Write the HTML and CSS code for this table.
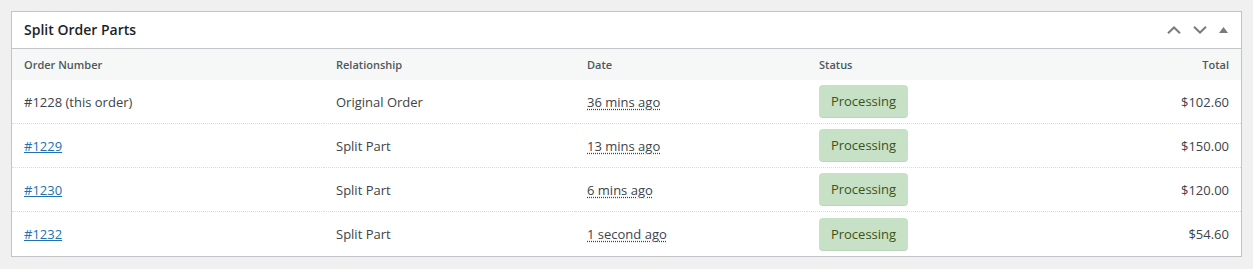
FILE: index.html
```html
<!DOCTYPE html>
<html>
<head>
<meta charset="utf-8">
<link rel="stylesheet" href="styles.css">
</head>
<body>
<div class="postbox">
  <div class="postbox-header">
    <h2 class="hndle">Split Order Parts</h2>
    <div class="handle-actions">
      <button class="handle-btn" aria-label="Move up">
        <svg width="14" height="8" viewBox="0 0 14 8"><path d="M1 7.2 L7 1.5 L13 7.2" fill="none" stroke="#787c82" stroke-width="2"/></svg>
      </button>
      <button class="handle-btn" aria-label="Move down">
        <svg width="14" height="8" viewBox="0 0 14 8"><path d="M1 0.8 L7 6.5 L13 0.8" fill="none" stroke="#787c82" stroke-width="2"/></svg>
      </button>
      <button class="handle-btn toggle" aria-label="Toggle panel">
        <svg width="9" height="6" viewBox="0 0 9 6"><path d="M0 6 L4.5 0 L9 6 Z" fill="#787c82"/></svg>
      </button>
    </div>
  </div>
  <table class="parts">
    <thead>
      <tr>
        <th class="c-num">Order Number</th>
        <th class="c-rel">Relationship</th>
        <th class="c-date">Date</th>
        <th class="c-status">Status</th>
        <th class="c-total">Total</th>
      </tr>
    </thead>
    <tbody>
      <tr>
        <td>#1228 (this order)</td>
        <td>Original Order</td>
        <td><abbr class="date" title="">36 mins ago</abbr></td>
        <td><mark class="status">Processing</mark></td>
        <td class="c-total">$102.60</td>
      </tr>
      <tr>
        <td><a href="#">#1229</a></td>
        <td>Split Part</td>
        <td><abbr class="date" title="">13 mins ago</abbr></td>
        <td><mark class="status">Processing</mark></td>
        <td class="c-total">$150.00</td>
      </tr>
      <tr>
        <td><a href="#">#1230</a></td>
        <td>Split Part</td>
        <td><abbr class="date" title="">6 mins ago</abbr></td>
        <td><mark class="status">Processing</mark></td>
        <td class="c-total">$120.00</td>
      </tr>
      <tr>
        <td><a href="#">#1232</a></td>
        <td>Split Part</td>
        <td><abbr class="date" title="">1 second ago</abbr></td>
        <td><mark class="status">Processing</mark></td>
        <td class="c-total">$54.60</td>
      </tr>
    </tbody>
  </table>
</div>
</body>
</html>
```

FILE: styles.css
```css
html, body {
  margin: 0;
  padding: 0;
  background: #f0f0f1;
}
body {
  padding: 11px 11px 0 11px;
  font-family: "Open Sans", "Noto Sans", sans-serif;
  font-size: 13px;
  color: #3c434a;
}
.postbox {
  background: #fff;
  border: 1px solid #c3c4c7;
  box-shadow: 0 1px 1px rgba(0,0,0,0.04);
}
.postbox-header {
  display: flex;
  align-items: center;
  justify-content: space-between;
  height: 36px;
  border-bottom: 1px solid #c3c4c7;
}
.hndle {
  margin: 0 0 1px 0;
  padding: 0 12px;
  font-size: 14px;
  font-weight: 600;
  color: #1d2327;
  line-height: 1.4;
}
.handle-actions {
  display: flex;
  align-items: center;
  padding-right: 8px;
}
.handle-btn {
  width: 26px;
  height: 36px;
  padding: 0;
  margin: 0;
  border: 0;
  background: none;
  display: flex;
  align-items: center;
  justify-content: center;
}
.handle-btn svg { display: block; }
.handle-btn.toggle { width: 20px; }
.parts {
  width: 100%;
  border-collapse: collapse;
  border-spacing: 0;
}
.parts th {
  background: #f6f7f7;
  text-align: left;
  font-size: 11px;
  font-weight: 600;
  color: #50575e;
  height: 31px;
  padding: 0 12px;
  vertical-align: middle;
}
.parts td {
  height: 43px;
  padding: 0 12px;
  vertical-align: middle;
  border-top: 1px dotted #dcdcde;
  color: #3c434a;
}
.parts tbody tr:first-child td {
  border-top: 0;
}
.parts tbody tr:last-child td {
  height: 44px;
}
.c-num { width: 288px; }
.c-rel { width: 227px; }
.c-date { width: 208px; }
.parts .c-total { text-align: right; }
.parts a {
  color: #2271b1;
  text-decoration: underline;
}
.date {
  text-decoration: underline dotted;
  text-underline-offset: 2px;
}
.status {
  display: inline-flex;
  align-items: center;
  justify-content: center;
  width: 89px;
  height: 33px;
  border-radius: 4px;
  background: #c6e1c6;
  color: #3d5219;
  font-size: 13px;
  box-sizing: border-box;
  border-bottom: 1px solid rgba(0,0,0,0.05);
}
```
